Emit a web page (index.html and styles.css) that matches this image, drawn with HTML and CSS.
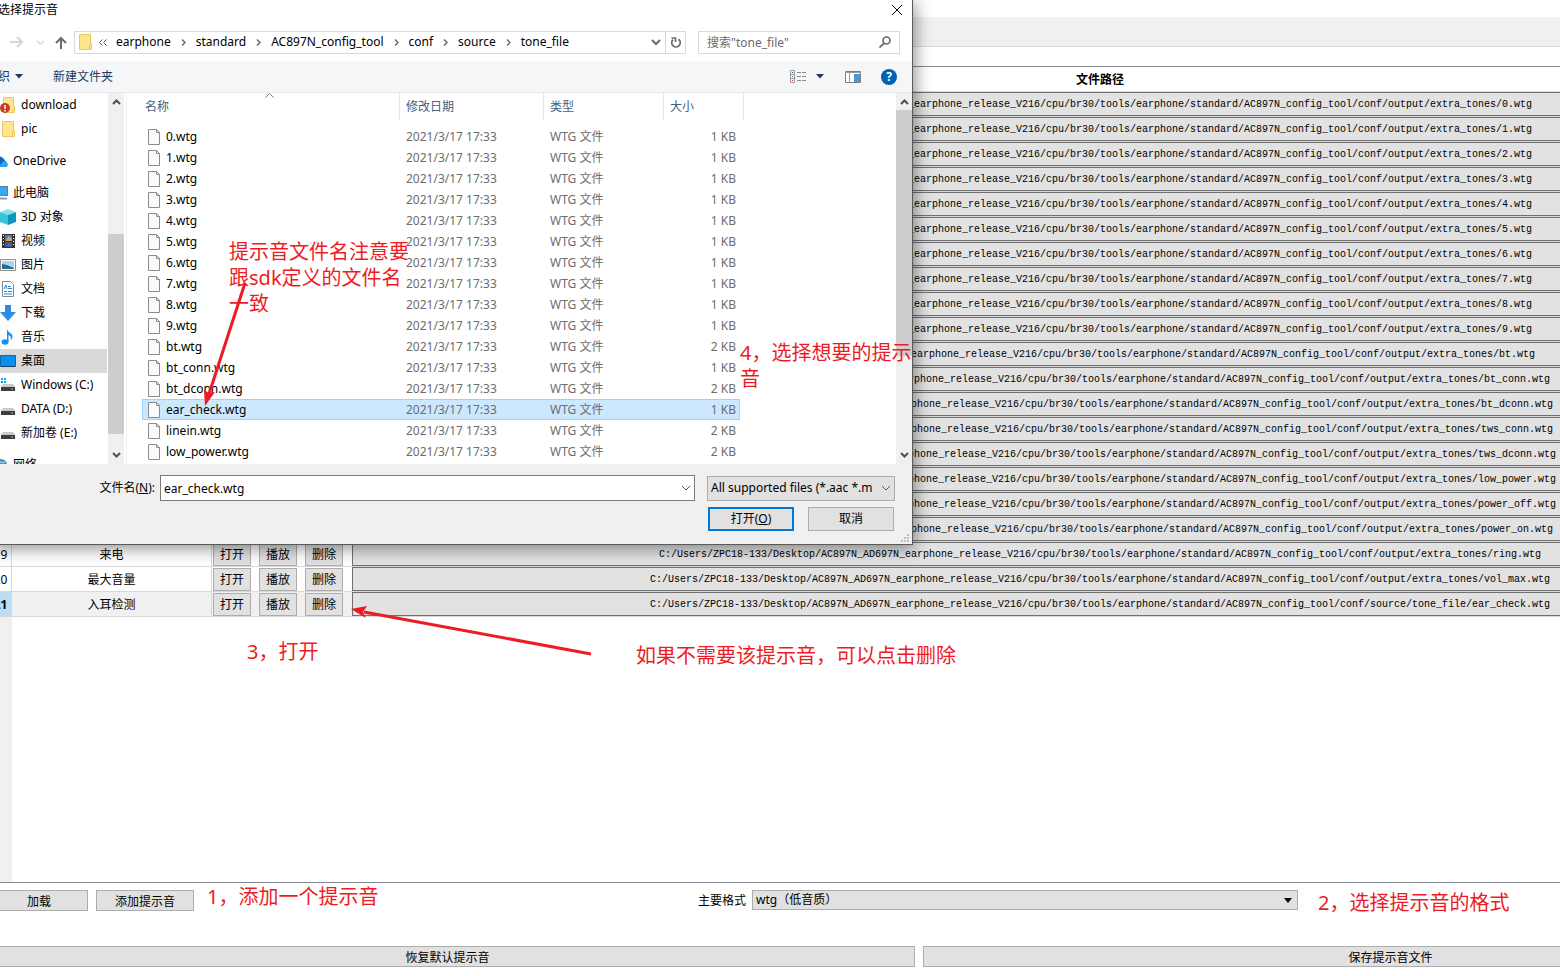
FILE: index.html
```
<!DOCTYPE html>
<html lang="zh-CN">
<head>
    <meta charset="UTF-8">
    <meta name="viewport" content="width=device-width, initial-scale=1.0">
    <title>选择提示音</title>
    <link rel="stylesheet" href="styles.css">
</head>
<body>
    <div class="tool">
        <div class="menu-strip"></div>
        <div class="tool-strip"></div>
        <div class="tone-panel">
            <table class="tones">
                <thead>
                    <tr><th class="col-num"></th><th class="col-name">名称</th><th class="col-act">操作</th><th class="col-path">文件路径</th></tr>
                </thead>
                <tbody id="tones"></tbody>
            </table>
        </div>
        <div class="format-bar">
            <button class="btn">加载</button>
            <button class="btn">添加提示音</button>
            <div class="format">
                <label for="format">主要格式</label>
                <div class="combo">
                    <select id="format"><option>wtg（低音质）</option></select>
                    <svg class="combo-arrow" width="8" height="5"><path d="M0 0h8L4 5z" fill="#000"/></svg>
                </div>
            </div>
        </div>
        <div class="save-bar">
            <button class="btn">恢复默认提示音</button>
            <button class="btn">保存提示音文件</button>
        </div>
    </div>

    <div class="dialog">
        <div class="title-bar">
            <span>选择提示音</span>
            <button class="close" aria-label="关闭"><svg width="12" height="12"><path d="M1 1l10 10M11 1L1 11" stroke="#000" fill="none"/></svg></button>
        </div>

        <div class="nav-bar">
            <svg class="nav-fwd" width="14" height="12" fill="none" stroke="#d6d6d6" stroke-width="2"><path d="M0 6h12M7 1l5 5-5 5"/></svg>
            <svg class="nav-drop" width="7" height="5" fill="none" stroke="#d6d6d6" stroke-width="1.5"><path d="M0 1l3.500 3L7 1"/></svg>
            <svg class="nav-up" width="12" height="13" fill="none" stroke="#6b6b6b" stroke-width="2"><path d="M6 13V2M1 7l5-5 5 5"/></svg>
            <div class="address">
                <svg class="folder" width="13" height="16"><path d="M0.5 0.5h11v9h1v6H.5z" fill="#ffe48f" stroke="#eec85a"/><path d="M10.500 15.500v-5h1" fill="none" stroke="#eec85a"/></svg>
                <span class="laquo"><svg width="8" height="7" fill="none" stroke="#555"><path d="M3.500.5l-3 3 3 3M7.500.5l-3 3 3 3"/></svg></span>
                <div class="crumbs" id="crumbs"></div>
                <svg class="address-drop" width="10" height="7" fill="none" stroke="#6b6b6b" stroke-width="2"><path d="M1 1l4 4 4-4"/></svg>
                <button class="refresh" aria-label="刷新"><svg width="12" height="13" fill="none" stroke="#6b6b6b" stroke-width="1.700"><path d="M8.500 3.200A4.300 4.300 0 1 1 3 3.600"/><path d="M1.500 2h4v4"/></svg></button>
            </div>
            <div class="search">
                <input type="text" aria-label="搜索" placeholder='搜索"tone_file"'>
                <svg width="12" height="12" fill="none" stroke="#6b6b6b" stroke-width="1.700"><circle cx="7.500" cy="4.500" r="3.500"/><path d="M5 7.500L.5 11.500"/></svg>
            </div>
        </div>

        <div class="command-bar">
            <button class="cmd organize">组织<svg width="8" height="5"><path d="M0 0h8L4 4.500z" fill="#1e395b"/></svg></button>
            <button class="cmd new-folder">新建文件夹</button>
            <button class="cmd view" aria-label="视图">
                <svg width="17" height="13" fill="none"><path d="M.5.5h4v12h-4zM.5 4.500h4M.5 8.500h4" stroke="#9a9a9a"/><path d="M7 2.500h4m1 0h4M7 6.500h4m1 0h4M7 10.500h4m1 0h4" stroke="#8a8a8a"/><path d="M2 2.500h1" stroke="#444"/><path d="M2 6.500h1" stroke="#3a8ee6"/><path d="M2 10.500h1" stroke="#d33"/></svg>
                <svg width="8" height="5"><path d="M0 0h8L4 4.500z" fill="#1e395b"/></svg>
            </button>
            <button class="cmd" aria-label="预览窗格"><svg width="16" height="12"><path d="M.5.5h15v11H.5z" fill="#fff" stroke="#7d7d7d"/><path d="M0 1.500h16M4.500 2v9" stroke="#9a9a9a"/><path d="M9 3h6v8H9z" fill="#409ae1"/></svg></button>
            <button class="cmd help" aria-label="帮助">?</button>
        </div>

        <div class="browser">
            <div class="side">
                <ul class="tree">
                    <li class="sub"><svg width="16" height="16"><path d="M3.500.5h10v9h1v6h-11z" fill="#ffe48f" stroke="#eec85a"/><circle cx="5" cy="11" r="5" fill="#cf3a1c"/><path d="M5 8v4M5 13v1.500" stroke="#fff" stroke-width="1.500"/></svg>download</li>
                    <li class="sub"><svg width="16" height="16"><path d="M2.500.5h11v9h1v6h-12z" fill="#ffe48f" stroke="#eec85a"/><path d="M12.500 15v-5h1" fill="none" stroke="#eec85a"/></svg>pic</li>
                    <li class="top"><svg width="16" height="16"><path d="M1 12a4 4 0 0 1 2-6 5 5 0 0 1 8-1l4 5a3 3 0 0 1-1 4H3z" fill="#0f6cbd"/><path d="M6 14l6-6a4 4 0 0 1 3 6z" fill="#28a8ea"/></svg>OneDrive</li>
                    <li class="top"><svg width="16" height="16"><path d="M0 1h16v10H0z" fill="#5a7f9c"/><path d="M1 2h14v8H1z" fill="#35a9f2"/><path d="M3 13.500h12" stroke="#7f9db0" stroke-width="2"/></svg>此电脑</li>
                    <li class="sub"><svg width="16" height="16"><path d="M0 3l8-3 8 3-8 3z" fill="#7fe3ee"/><path d="M0 3l8 3v10l-8-3z" fill="#37c3d8"/><path d="M16 3L8 6v10l8-3z" fill="#0f95bf"/></svg>3D 对象</li>
                    <li class="sub"><svg width="16" height="16"><path d="M2 1h13v14H2z" fill="#333"/><path d="M5 2h7v6H5z" fill="#3b7dd8"/><path d="M5 9h7v5H5z" fill="#2b5fb0"/><path d="M6 7l3-4 3 3v2H6z" fill="#e9a23b"/><path d="M7 13l2-3 2 3z" fill="#d9482b"/><path d="M3.500 2v12M13.500 2v12" stroke="#fff" stroke-dasharray="1 2"/></svg>视频</li>
                    <li class="sub"><svg width="16" height="16"><path d="M.5 2.500h15v11H.5z" fill="#fff" stroke="#8c8c8c"/><path d="M2 4h12v8H2z" fill="#a9d6f5"/><path d="M2 7l5 1 7 3v1H2z" fill="#2b6d87"/></svg>图片</li>
                    <li class="sub"><svg width="16" height="16"><path d="M2.500.5h8l3 3v12h-11z" fill="#fff" stroke="#7d8b94"/><path d="M4 8l2-4 1 4M8 5.500h3M8 7.500h4M4 10.500h3m1 0h4M4 13h8" stroke="#2389d7" fill="none"/></svg>文档</li>
                    <li class="sub"><svg width="16" height="16"><path d="M5 0h6v7h5l-8 9-8-9h5z" fill="#2f8be0"/></svg>下载</li>
                    <li class="sub"><svg width="16" height="16"><ellipse cx="5" cy="13" rx="3.500" ry="2.800" fill="#1294f2"/><path d="M7 13V0c1 4 6 4 5.500 8-.5 2-1 3-2 3 1-3 0-4-2-5v7z" fill="#1294f2"/></svg>音乐</li>
                    <li class="sub current"><svg width="16" height="16"><path d="M.5 2.500h15v11H.5z" fill="#0d8ff2" stroke="#1267a5"/><path d="M1 13.500h14" stroke="#173f63"/></svg>桌面</li>
                    <li class="sub"><svg width="16" height="16"><path d="M1 1h2v2H1zM4 1h2v2H4zM1 4h2v2H1zM4 4h2v2H4z" fill="#00adef"/><path d="M3 7h10l2 3H1z" fill="#c9c9c9"/><path d="M1 10h14v4H1z" fill="#3d3d3d"/><path d="M11 12h2" stroke="#5fe05f"/></svg>Windows (C:)</li>
                    <li class="sub"><svg width="16" height="16"><path d="M3 7h10l2 3H1z" fill="#c9c9c9"/><path d="M1 10h14v4H1z" fill="#3d3d3d"/><path d="M11 12h2" stroke="#5fe05f"/></svg>DATA (D:)</li>
                    <li class="sub"><svg width="16" height="16"><path d="M3 7h10l2 3H1z" fill="#c9c9c9"/><path d="M1 10h14v4H1z" fill="#3d3d3d"/><path d="M11 12h2" stroke="#5fe05f"/></svg>新加卷 (E:)</li>
                    <li class="top"><svg width="16" height="16"><circle cx="9" cy="8" r="6" fill="#3d97c9"/><path d="M5 4c3 0 5 3 8 1" stroke="#bfe3f5" fill="none"/></svg>网络</li>
                </ul>
                <div class="scroll side-scroll">
                    <svg width="9" height="6"><path d="M1 5l3.500-3.500L8 5"/></svg>
                    <div class="track"><div class="thumb"></div></div>
                    <svg width="9" height="6"><path d="M1 1l3.500 3.500L8 1"/></svg>
                </div>
            </div>
            <div class="files-pane">
                <svg class="sort-mark" width="9" height="5" fill="none" stroke="#7a7a7a"><path d="M.5 4.500l4-4 4 4"/></svg>
                <table class="files">
                    <thead>
                        <tr><th class="f-name"><span>名称</span></th><th class="f-date"><span>修改日期</span></th><th class="f-type"><span>类型</span></th><th class="f-size"><span>大小</span></th></tr>
                    </thead>
                    <tbody id="files"></tbody>
                </table>
            </div>
            <div class="scroll file-scroll">
                <svg width="9" height="6"><path d="M1 5l3.500-3.500L8 5"/></svg>
                <div class="track"><div class="thumb"></div></div>
                <svg width="9" height="6"><path d="M1 1l3.500 3.500L8 1"/></svg>
            </div>
        </div>

        <div class="dialog-foot">
            <div class="foot-row">
                <label for="filename">文件名(<u>N</u>):</label>
                <div class="combo file-combo">
                    <input id="filename" type="text" value="ear_check.wtg">
                    <svg class="combo-arrow" width="10" height="6" fill="none" stroke="#555"><path d="M1 1l4 4 4-4"/></svg>
                </div>
                <div class="combo type-combo">
                    <select aria-label="文件类型"><option>All supported files (*.aac *.m</option></select>
                    <svg class="combo-arrow" width="10" height="6" fill="none" stroke="#555"><path d="M1 1l4 4 4-4"/></svg>
                </div>
            </div>
            <div class="foot-row">
                <button class="btn primary">打开(<u>O</u>)</button>
                <button class="btn">取消</button>
            </div>
            <svg class="grip" width="8" height="8" fill="#bfbfbf"><path d="M6 0h2v2H6zM3 3h2v2H3zM6 3h2v2H6zM0 6h2v2H0zM3 6h2v2H3zM6 6h2v2H6z"/></svg>
        </div>
    </div>

    <!-- red notes over the windows -->
    <p class="note note-name">提示音文件名注意要跟sdk定义的文件名一致</p>
    <p class="note note-pick">4，选择想要的提示音</p>
    <p class="note note-open">3，打开</p>
    <p class="note note-delete">如果不需要该提示音，可以点击删除</p>
    <p class="note note-add">1，添加一个提示音</p>
    <p class="note note-format">2，选择提示音的格式</p>
    <svg class="arrow arrow-file" width="50" height="130"><path d="M44 4L8 115" stroke="#ed1c24" stroke-width="3"/><path d="M4 127l-1-16 5 3 6-1z" fill="#ed1c24"/></svg>
    <svg class="arrow arrow-delete" width="250" height="60"><path d="M241 49L14 7" stroke="#ed1c24" stroke-width="3"/><path d="M1 4l16-3-4 6 3 6z" fill="#ed1c24"/></svg>

    <script src="script.js"></script>
</body>
</html>
```
FILE: styles.css
```
* {
    box-sizing: border-box;
}

body {
    position: relative;
    margin: 0;
    min-height: 100vh;
    overflow: hidden;
    background: white;
    color: black;
    font-family: "Noto Sans", "Noto Sans CJK SC", sans-serif;
    font-size: 12px;
    line-height: 16px;
}

button, input, select {
    margin: 0;
    padding: 0;
    font: inherit;
    color: inherit;
    border-radius: 0;
}

svg {
    flex: none;
}

/* tool window, it runs past both sides of the screen */
.tool {
    display: flex;
    flex-direction: column;
    height: 100vh;
    margin: 0 -298px 0 -20px;
}

.menu-strip {
    height: 17px;
}

.tool-strip {
    height: 30px;
    background: #f0f0f0;
    border-bottom: 1px solid #d9d9d9;
}

.tone-panel {
    flex: 1;
    margin: 19px 10px 0;
    border-top: 1px solid #828790;
    border-bottom: 1px solid #828790;
    background: linear-gradient(to right, #f0f0f0 22px, white 22px);
}

.tones {
    width: 100%;
    table-layout: fixed;
    border-collapse: separate;
    border-spacing: 0;
    text-align: center;
}

.tones th, .tones td {
    height: 25px;
    padding: 0;
    background: white;
    border-bottom: 1px solid #d8d8d8;
}

.tones th, .tones .col-num, .tones .col-name {
    padding-top: 2px;
}

.tones .col-num {
    width: 22px;
    border-right: 1px solid #d8d8d8;
    font-weight: normal;
}

.tones .col-name {
    width: 200px;
    border-right: 1px solid #d8d8d8;
}

.tones .col-act {
    width: 140px;
}

.tones .actions {
    display: flex;
    gap: 8px;
    padding-left: 1px;
}

.tones .actions .btn {
    width: 38px;
    height: 23px;
    padding-top: 2px;
}

.tones .current td {
    background: #f0f0f0;
}

.tones .current .col-num {
    background: #bcdcf4;
    font-weight: bold;
}

.path {
    display: block;
    width: 100%;
    height: 24px;
    padding-top: 2px;
    background: #e2e2e2;
    border: 1px solid #707070;
    font-family: "Liberation Mono", monospace;
    font-size: 10px;
}

.btn {
    background: #e1e1e1;
    border: 1px solid #adadad;
    text-align: center;
}

.format-bar {
    display: flex;
    gap: 8px;
    padding: 7px 10px 0;
    height: 28px;
}

.format-bar .btn {
    width: 98px;
    height: 21px;
    padding-top: 2px;
}

.format {
    display: flex;
    flex: 1;
    align-items: center;
    gap: 6px;
    margin: 0 550px 0 496px;
    height: 20px;
}

.format label {
    padding-top: 2px;
}

.format .combo {
    flex: 1;
    height: 20px;
    background: #e1e1e1;
    border: 1px solid #adadad;
}

.save-bar {
    display: flex;
    gap: 8px;
    padding: 35px 0 9px;
}

.save-bar .btn {
    flex: 1;
    height: 21px;
    padding-top: 2px;
}

.combo {
    display: flex;
    align-items: center;
    padding-right: 5px;
}

.combo select, .combo input {
    flex: 1;
    min-width: 0;
    height: 100%;
    padding-left: 3px;
    background: none;
    border: none;
    outline: none;
    appearance: none;
}

/* file dialog */
.dialog {
    position: absolute;
    top: 0;
    left: -10px;
    width: 923px;
    background: white;
    border-right: 1px solid #5a5a5a;
    border-bottom: 1px solid #5a5a5a;
    box-shadow: 2px 3px 16px rgba(0, 0, 0, 0.45);
}

.title-bar {
    display: flex;
    align-items: center;
    justify-content: space-between;
    height: 20px;
    padding: 0 9px 0 8px;
}

.close, .cmd {
    display: flex;
    align-items: center;
    background: none;
    border: none;
}

.nav-bar {
    display: flex;
    align-items: center;
    height: 41px;
    padding: 3px 12px 0 20px;
}

.nav-drop {
    margin-left: 13px;
}

.nav-up {
    margin: 0 7px 0 11px;
}

.address {
    display: flex;
    flex: 1;
    align-items: center;
    height: 23px;
    padding-left: 4px;
    border: 1px solid #d9d9d9;
}

.laquo {
    display: flex;
    margin: 0 9px 0 7px;
}

.crumbs {
    display: flex;
    flex: 1;
    align-items: center;
}

.crumbs svg {
    margin: 0 10px;
    fill: none;
    stroke: #6b6b6b;
    stroke-width: 1.5;
}

.refresh {
    display: flex;
    align-items: center;
    justify-content: center;
    width: 20px;
    height: 21px;
    margin-left: 4px;
    background: none;
    border: none;
    border-left: 1px solid #d9d9d9;
}

.search {
    display: flex;
    align-items: center;
    width: 202px;
    height: 23px;
    margin-left: 12px;
    padding: 0 8px;
    border: 1px solid #d9d9d9;
}

.search input {
    flex: 1;
    min-width: 0;
    padding-top: 2px;
    border: none;
    outline: none;
    background: none;
}

.search input::placeholder {
    color: #6d6d6d;
}

.command-bar {
    display: flex;
    align-items: center;
    height: 32px;
    padding-right: 15px;
    background: #f5f6f7;
    border-bottom: 1px solid #e6e8ea;
    color: #1e395b;
}

.organize {
    gap: 5px;
    margin-left: -4px;
}

.new-folder {
    margin: 0 auto 0 30px;
}

.view {
    gap: 9px;
    margin-right: 21px;
}

.help {
    justify-content: center;
    width: 16px;
    height: 16px;
    margin-left: 20px;
    background: #0063b1;
    border-radius: 8px;
    color: white;
    font-weight: bold;
}

.browser {
    display: flex;
    height: 371px;
}

.side {
    display: flex;
    width: 137px;
    border-right: 1px solid #f0f0f0;
    overflow: hidden;
}

.tree {
    flex: 1;
    margin: 0;
    padding: 0;
    list-style: none;
}

.tree li {
    display: flex;
    align-items: center;
    gap: 5px;
    height: 24px;
    padding-left: 10px;
    white-space: nowrap;
}

.tree .top {
    margin-top: 8px;
    padding-left: 2px;
}

.tree .current {
    background: #d9d9d9;
}

.scroll {
    display: flex;
    flex-direction: column;
    align-items: center;
    width: 16px;
    padding: 6px 0;
    background: #f0f0f0;
}

.scroll > svg {
    fill: none;
    stroke: #505050;
    stroke-width: 2;
}

.track {
    display: flex;
    flex-direction: column;
    flex: 1;
    align-self: stretch;
    margin: 5px 0;
}

.thumb {
    background: #cdcdcd;
}

.side-scroll {
    margin: 0 2px 0 1px;
}

.side-scroll .thumb {
    height: 200px;
    margin-top: 124px;
}

.file-scroll .thumb {
    height: 246px;
}

.files-pane {
    position: relative;
    flex: 1;
    padding-left: 15px;
}

.sort-mark {
    position: absolute;
    top: 0;
    left: 138px;
}

.files {
    width: 602px;
    table-layout: fixed;
    border-collapse: separate;
    border-spacing: 0;
}

.files th {
    height: 33px;
    padding: 0;
    color: #43607c;
    font-weight: normal;
    text-align: left;
    vertical-align: top;
}

.files th span {
    display: block;
    height: 27px;
    padding: 6px 6px 0;
    border-right: 1px solid #e5e5e5;
}

.files .f-name {
    width: 258px;
}

.files .f-name span {
    padding-left: 3px;
}

.files .f-date {
    width: 144px;
}

.files .f-type {
    width: 120px;
}

.files td {
    height: 21px;
    padding: 0 6px;
    color: #6d6d6d;
}

.files td:first-child {
    color: black;
}

.files td:last-child {
    padding-right: 4px;
    border-right: 4px solid transparent;
    background-clip: padding-box;
    text-align: right;
}

.file {
    display: flex;
    align-items: center;
    gap: 6px;
}

.files .current td {
    background-color: #cce8ff;
    box-shadow: inset 0 1px #99d1ff, inset 0 -1px #99d1ff;
}

.files .current td:first-child {
    box-shadow: inset 1px 1px #99d1ff, inset 0 -1px #99d1ff;
}

.files .current td:last-child {
    box-shadow: inset 0 1px #99d1ff, inset -1px -1px #99d1ff;
}

.dialog-foot {
    position: relative;
    display: flex;
    flex-direction: column;
    gap: 6px;
    padding: 11px 17px 13px 0;
    background: #f0f0f0;
}

.foot-row {
    display: flex;
    justify-content: flex-end;
    align-items: center;
}

.file-combo {
    width: 535px;
    height: 26px;
    margin: 0 12px 0 5px;
    padding-right: 3px;
    background: white;
    border: 1px solid #7a7a7a;
}

.type-combo {
    width: 188px;
    height: 25px;
    padding-right: 3px;
    background: #e1e1e1;
    border: 1px solid #adadad;
}

.foot-row .btn {
    width: 86px;
    height: 24px;
    margin: 0 1px 0 13px;
}

.foot-row .primary {
    border: 2px solid #0078d7;
}

.grip {
    position: absolute;
    right: 3px;
    bottom: 2px;
}

/* notes */
.note {
    position: absolute;
    margin: 0;
    color: #ed1c24;
    font-size: 20px;
    line-height: 26px;
}

.note-name {
    top: 239px;
    left: 229px;
    width: 186px;
}

.note-pick {
    top: 340px;
    left: 740px;
    width: 176px;
}

.note-open {
    top: 639px;
    left: 247px;
}

.note-delete {
    top: 643px;
    left: 636px;
}

.note-add {
    top: 884px;
    left: 207px;
}

.note-format {
    top: 890px;
    left: 1318px;
}

.arrow {
    position: absolute;
    fill: none;
}

.arrow-file {
    top: 279px;
    left: 201px;
}

.arrow-delete {
    top: 605px;
    left: 350px;
}
```
FILE: script.js
```
const root = "C:/Users/ZPC18-133/Desktop/AC897N_AD697N_earphone_release_V216/cpu/br30/tools/earphone/standard/AC897N_config_tool/conf/";

const tones = [
    ["数字0", "0"], ["数字1", "1"], ["数字2", "2"], ["数字3", "3"], ["数字4", "4"],
    ["数字5", "5"], ["数字6", "6"], ["数字7", "7"], ["数字8", "8"], ["数字9", "9"],
    ["蓝牙模式", "bt"], ["蓝牙连接", "bt_conn"], ["蓝牙断开", "bt_dconn"],
    ["对耳连接", "tws_conn"], ["对耳断开", "tws_dconn"], ["低电量", "low_power"],
    ["关机", "power_off"], ["开机", "power_on"], ["来电", "ring"],
    ["最大音量", "vol_max"], ["入耳检测", "ear_check"]
];

// name, size in KB
const files = [
    ["0", 1], ["1", 1], ["2", 1], ["3", 1], ["4", 1], ["5", 1], ["6", 1], ["7", 1],
    ["8", 1], ["9", 1], ["bt", 2], ["bt_conn", 1], ["bt_dconn", 2],
    ["ear_check", 1], ["linein", 2], ["low_power", 2]
];

const crumbs = ["earphone", "standard", "AC897N_config_tool", "conf", "source", "tone_file"];

const fileIcon = `<svg width="12" height="16"><path d="M.5.5h8l3 3v12H.5z" fill="#fafafa" stroke="#8c8c8c"/><path d="M8.500.5v3h3" fill="none" stroke="#8c8c8c"/></svg>`;

document.getElementById("tones").innerHTML = tones.map(([label, name], i) => {
    const dir = name === "ear_check" ? "source/tone_file/" : "output/extra_tones/";
    return `<tr class="${name === "ear_check" ? "current" : ""}">
        <td class="col-num">${i + 1}</td>
        <td class="col-name">${label}</td>
        <td><div class="actions"><button class="btn">打开</button><button class="btn">播放</button><button class="btn">删除</button></div></td>
        <td><button class="path">${root}${dir}${name}.wtg</button></td>
    </tr>`;
}).join("");

document.getElementById("files").innerHTML = files.map(([name, size]) => `<tr class="${name === "ear_check" ? "current" : ""}">
    <td><div class="file">${fileIcon}<span>${name}.wtg</span></div></td>
    <td>2021/3/17 17:33</td>
    <td>WTG 文件</td>
    <td>${size} KB</td>
</tr>`).join("");

document.getElementById("crumbs").innerHTML = crumbs
    .map(c => `<span>${c}</span>`)
    .join(`<svg width="5" height="7"><path d="M1 .5l3 3-3 3"/></svg>`);
```
